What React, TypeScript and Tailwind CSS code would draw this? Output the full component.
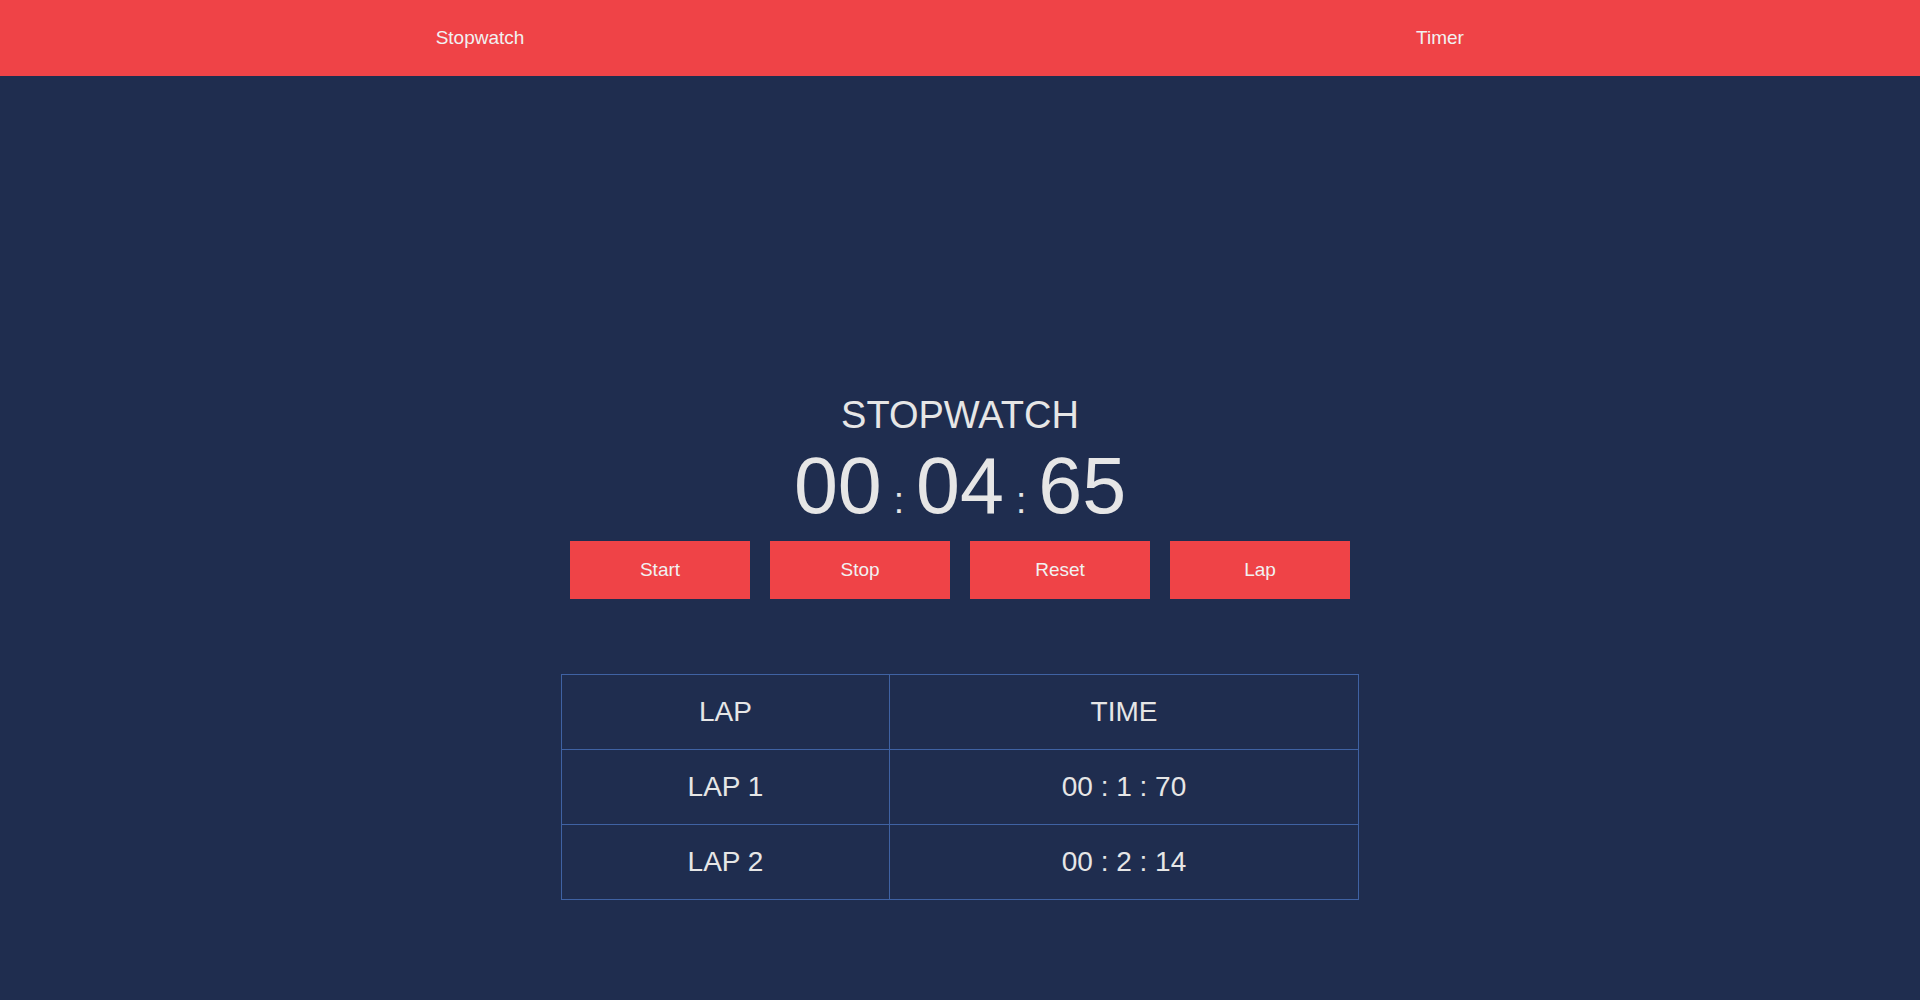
const laps = [
  { name: "LAP 1", time: "00 : 1 : 70" },
  { name: "LAP 2", time: "00 : 2 : 14" },
];

const buttons = ["Start", "Stop", "Reset", "Lap"];

function Colon() {
  return <span className="mx-3 text-[37px] leading-none">:</span>;
}

export default function App() {
  return (
    <div
      className="min-h-[1000px] bg-[#1f2d4f] text-[#e6e6e6]"
      style={{ fontFamily: '"Liberation Sans", Arial, Helvetica, sans-serif' }}
    >
      {/* top tabs */}
      <nav className="flex h-[76px] bg-[#ef4347] text-[19px] text-[#f1f1f1]">
        <div className="flex flex-1 items-center justify-center">Stopwatch</div>
        <div className="flex flex-1 items-center justify-center">Timer</div>
      </nav>

      <main className="flex flex-col items-center pt-[318px]">
        <h1 className="text-[38px] leading-[42px] font-normal">STOPWATCH</h1>

        <div className="mt-[10px] flex items-baseline text-[79px] leading-none">
          <span>00</span>
          <Colon />
          <span>04</span>
          <Colon />
          <span>65</span>
        </div>

        <div className="mt-4 flex gap-5">
          {buttons.map((b) => (
            <button
              key={b}
              className="h-[58px] w-[180px] bg-[#ef4347] text-[19px] text-[#f1f1f1]"
            >
              {b}
            </button>
          ))}
        </div>

        <table className="mt-[75px] w-[798px] border-collapse text-[28px]">
          <thead>
            <tr>
              <th className="h-[75px] w-[328px] border border-[#3f62a3] font-normal">LAP</th>
              <th className="h-[75px] border border-[#3f62a3] font-normal">TIME</th>
            </tr>
          </thead>
          <tbody>
            {laps.map((l) => (
              <tr key={l.name}>
                <td className="h-[75px] border border-[#3f62a3] text-center">{l.name}</td>
                <td className="h-[75px] border border-[#3f62a3] text-center">{l.time}</td>
              </tr>
            ))}
          </tbody>
        </table>
      </main>
    </div>
  );
}
